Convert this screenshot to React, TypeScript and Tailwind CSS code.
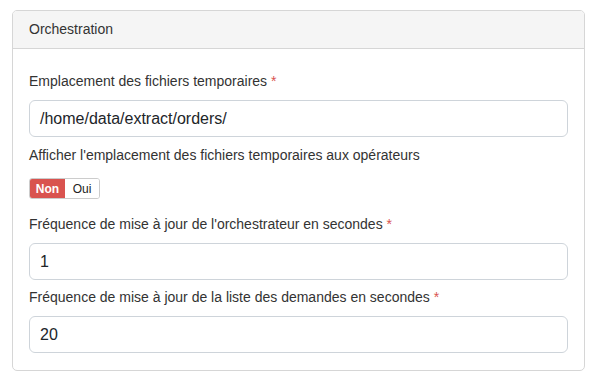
import React from "react";

function Label({ children, required }: { children: React.ReactNode; required?: boolean }) {
  return (
    <div className="text-[14px] leading-[20px] text-[#333]">
      {children}
      {required && <span className="text-[#d9534f]"> *</span>}
    </div>
  );
}

function Input({ value }: { value: string }) {
  return (
    <div className="mt-[9px] h-[37px] rounded-[6px] border border-[#ced4da] bg-white px-[10px] flex items-center text-[16px] text-[#212529]">
      {value}
    </div>
  );
}

export default function App() {
  return (
    <div className="w-[592px] h-[381px] bg-white pt-[10px] px-[12px]" style={{ fontFamily: '"Liberation Sans", Arial, sans-serif' }}>
      <div className="w-[573px] h-[361px] rounded-[5px] border border-[#d6d6d6] overflow-hidden">
        <div className="h-[38px] bg-[#f5f5f5] border-b border-[#d6d6d6] px-[16px] flex items-center text-[14px] text-[#333]">
          Orchestration
        </div>
        <div className="pl-[16px] pr-[16px] pt-[22px] flex flex-col">
          <Label required>Emplacement des fichiers temporaires</Label>
          <Input value="/home/data/extract/orders/" />
          <div className="mt-[8px]">
            <Label>Afficher l'emplacement des fichiers temporaires aux opérateurs</Label>
          </div>
          <div className="mt-[13px] flex h-[21px] w-[71px] rounded-[3px] border border-[#ccc] overflow-hidden text-[12px]">
            <div className="w-[35px] bg-[#d9534f] text-white font-bold flex items-center justify-center">Non</div>
            <div className="flex-1 bg-white text-[#222] flex items-center justify-center">Oui</div>
          </div>
          <div className="mt-[15px]">
            <Label required>Fréquence de mise à jour de l'orchestrateur en secondes</Label>
          </div>
          <Input value="1" />
          <div className="mt-[7px]">
            <Label required>Fréquence de mise à jour de la liste des demandes en secondes</Label>
          </div>
          <Input value="20" />
        </div>
      </div>
    </div>
  );
}
